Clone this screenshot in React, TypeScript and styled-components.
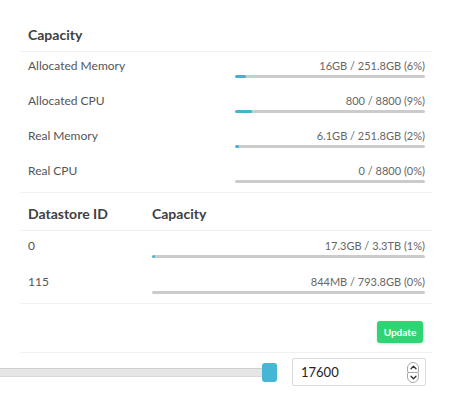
import React from "react";
import styled, { createGlobalStyle } from "styled-components";

const Global = createGlobalStyle`
  html, body { margin: 0; padding: 0; background: #fff; }
  body { font-family: Lato, "Open Sans", "Liberation Sans", sans-serif; }
  * { box-sizing: border-box; }
`;

const Page = styled.div`
  width: 474px;
  padding-top: 18px;
`;

const Section = styled.div`
  margin-left: 20px;
  width: 412px;
  border-bottom: 1px solid #f1f1f1;
`;

const HeaderRow = styled.div<{ $cols: string; $top?: number }>`
  display: grid;
  grid-template-columns: ${(p) => p.$cols};
  padding: ${(p) => p.$top ?? 0}px 7px 0 8px;
  height: ${(p) => 34 + (p.$top ?? 0)}px;
  line-height: 34px;
  border-bottom: 1px solid #f1f1f1;
  font-size: 14px;
  font-weight: 700;
  color: #404040;
`;

const Row = styled.div<{ $cols: string; $h: number }>`
  display: grid;
  grid-template-columns: ${(p) => p.$cols};
  height: ${(p) => p.$h}px;
  padding: ${(p) => (p.$h === 35 ? 7 : 8)}px 7px 0 8px;
`;

const Label = styled.div`
  font-size: 12px;
  line-height: 14px;
  color: #555;
`;

const Cell = styled.div`
  display: flex;
  flex-direction: column;
  align-items: stretch;
`;

const Value = styled.div`
  font-size: 11px;
  line-height: 14px;
  color: #666;
  text-align: right;
`;

const Bar = styled.div`
  margin-top: 2px;
  height: 3px;
  border-radius: 2px;
  background: #cbcbcb;
  overflow: hidden;
`;

const Fill = styled.div`
  height: 100%;
  background: #41b4d2;
  border-radius: 2px;
`;

const Footer = styled.div`
  margin-left: 20px;
  width: 412px;
  height: 49px;
  padding: 17px 9px 0 0;
  display: flex;
  justify-content: flex-end;
  align-items: flex-start;
  border-bottom: 1px solid #f1f1f1;
`;

const UpdateButton = styled.button`
  width: 46px;
  height: 22px;
  border: none;
  border-radius: 3px;
  background: #2fd573;
  color: #fff;
  font-family: Lato, "Open Sans", sans-serif;
  font-weight: 700;
  font-size: 10px;
  padding: 0;
  box-shadow: 0 1px 3px rgba(0, 0, 0, 0.15);
`;

const SliderRow = styled.div`
  width: 426px;
  padding-top: 5px;
  display: flex;
  align-items: center;
  gap: 15px;
`;

const Track = styled.div`
  flex: 1;
  height: 9px;
  background: #e6e6e6;
  border-top: 1px solid #cfcfcf;
  border-bottom: 1px solid #d8d8d8;
  border-radius: 0 4px 4px 0;
  display: flex;
  justify-content: flex-end;
  align-items: center;
`;

const Thumb = styled.div`
  width: 15px;
  height: 19px;
  border-radius: 3px;
  background: #45b7d5;
  flex: none;
`;

const NumberBox = styled.div`
  width: 134px;
  height: 28px;
  border: 1px solid #dcdcdc;
  border-radius: 2px;
  display: flex;
  align-items: center;
  justify-content: space-between;
  padding: 0 6px 0 8px;
  font-size: 13px;
  color: #222;
`;

const Spinner = styled.div`
  display: flex;
  flex-direction: column;
`;

const SpinBtn = styled.div<{ $down?: boolean }>`
  width: 12px;
  height: 11px;
  border: 1px solid #a8a8a8;
  border-radius: ${(p) => (p.$down ? "2px 2px 6px 6px" : "6px 6px 2px 2px")};
  display: flex;
  align-items: center;
  justify-content: center;
  margin-top: ${(p) => (p.$down ? "-1px" : "0")};
`;

const capCols = "207px 1fr";
const dsCols = "124px 1fr";

const capacity = [
  { label: "Allocated Memory", value: "16GB / 251.8GB (6%)", pct: 6 },
  { label: "Allocated CPU", value: "800 / 8800 (9%)", pct: 9 },
  { label: "Real Memory", value: "6.1GB / 251.8GB (2%)", pct: 2 },
  { label: "Real CPU", value: "0 / 8800 (0%)", pct: 0 },
];

const datastores = [
  { id: "0", value: "17.3GB / 3.3TB (1%)", pct: 1 },
  { id: "115", value: "844MB / 793.8GB (0%)", pct: 0 },
];

const Chevron = ({ down }: { down?: boolean }) => (
  <svg width="7" height="5" viewBox="0 0 7 5">
    <path
      d={down ? "M1 1.2 L3.5 3.8 L6 1.2" : "M1 3.8 L3.5 1.2 L6 3.8"}
      fill="none"
      stroke="#333"
      strokeWidth="1.3"
      strokeLinecap="round"
      strokeLinejoin="round"
    />
  </svg>
);

export default function App() {
  return (
    <Page>
      <Global />
      <Section>
        <HeaderRow $cols={capCols}>
          <div>Capacity</div>
        </HeaderRow>
        {capacity.map((r) => (
          <Row key={r.label} $cols={capCols} $h={35}>
            <Label>{r.label}</Label>
            <Cell>
              <Value>{r.value}</Value>
              <Bar>
                <Fill style={{ width: `${r.pct}%` }} />
              </Bar>
            </Cell>
          </Row>
        ))}
      </Section>
      <Section>
        <HeaderRow $cols={dsCols} $top={4}>
          <div>Datastore ID</div>
          <div>Capacity</div>
        </HeaderRow>
        {datastores.map((r) => (
          <Row key={r.id} $cols={dsCols} $h={36}>
            <Label>{r.id}</Label>
            <Cell>
              <Value>{r.value}</Value>
              <Bar>
                <Fill style={{ width: `${r.pct}%` }} />
              </Bar>
            </Cell>
          </Row>
        ))}
      </Section>
      <Footer>
        <UpdateButton>Update</UpdateButton>
      </Footer>
      <SliderRow>
        <Track>
          <Thumb />
        </Track>
        <NumberBox>
          <span>17600</span>
          <Spinner>
            <SpinBtn>
              <Chevron />
            </SpinBtn>
            <SpinBtn $down>
              <Chevron down />
            </SpinBtn>
          </Spinner>
        </NumberBox>
      </SliderRow>
    </Page>
  );
}
